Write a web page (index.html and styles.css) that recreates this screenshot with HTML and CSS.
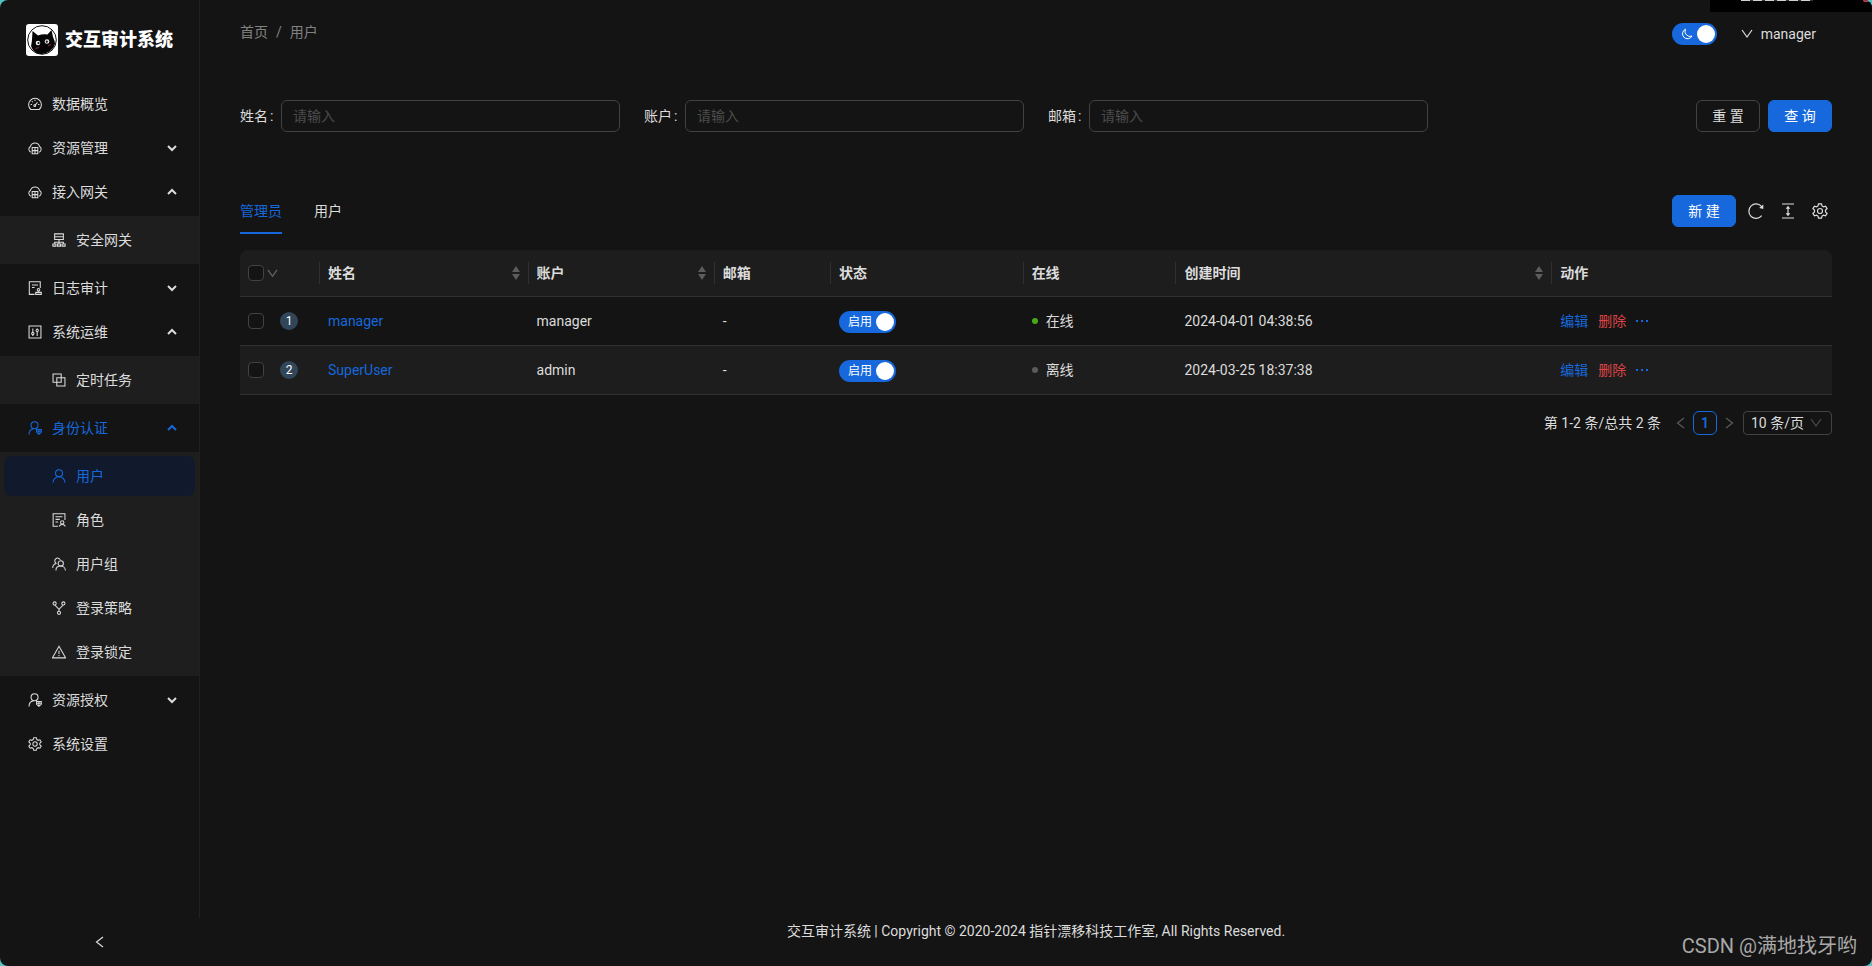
FILE: index.html
```
<!DOCTYPE html>
<html lang="zh-CN">
<head>
    <meta charset="UTF-8">
    <meta name="viewport" content="width=device-width, initial-scale=1.0">
    <title>交互审计系统 - 用户</title>
    <link rel="stylesheet" href="styles.css">
</head>
<body>

    <!-- 图标 -->
    <svg class="sprite" aria-hidden="true">
        <symbol id="i-dashboard" viewBox="0 0 16 16"><path d="M3.200 14.300A7.300 7.300 0 1 1 12.800 14.300ZM8 9.500 10.800 6.200M8 3v1.500M3 8.500h1.500M11.500 8.500h1.500M4.500 5l1 1"/><circle cx="7.700" cy="9.900" r="1"/></symbol>
        <symbol id="i-cloud" viewBox="0 0 16 16"><path d="M3.500 12.800A3.600 3.600 0 0 1 2.800 6.200 5.400 5.400 0 0 1 13.200 6.200 3.600 3.600 0 0 1 12.500 12.800M4.800 7.500h6.400v7H4.800ZM4.800 11h6.400M8 7.500V14.500"/></symbol>
        <symbol id="i-gateway" viewBox="0 0 16 16"><path d="M3 1h10v6.500H3ZM3 4.300h10M8 7.500v3M3 13v-2.500h10V13M8 10.500V13M1 12.500h3.500V15H1ZM6.300 12.500h3.500V15H6.300ZM11.500 12.500H15V15h-3.500Z"/></symbol>
        <symbol id="i-audit" viewBox="0 0 16 16"><path d="M7.500 15.300H1.500V.8H14V8M4.500 4.500h7M4.500 7.500h3M8.800 15.300v-2.300h6.400v2.300ZM12 13v-1.500"/><circle cx="12" cy="10" r="1.500"/></symbol>
        <symbol id="i-control" viewBox="0 0 16 16"><path d="M1.200 1.200h13.600v13.600H1.200ZM5.500 4v4.500M5.500 11v1.500M10.500 4v1M10.500 7.500V12.500"/><circle cx="5.500" cy="9.700" r="1.300"/><circle cx="10.500" cy="6.200" r="1.300"/></symbol>
        <symbol id="i-blocks" viewBox="0 0 16 16"><path d="M1.200 1.200h9.300v9.300H1.200ZM10.500 5.500h4.300v9.300H5.500v-4.300M5.500 10.500v-5h5"/></symbol>
        <symbol id="i-userlock" viewBox="0 0 16 16"><circle cx="7.500" cy="4.800" r="4"/><path d="M1.200 15.300C1.200 11.500 3.500 9 6.800 8.800M9.800 9.800h5.400v3.200L12.500 15.200 9.800 13ZM10 11.800h5M12.500 10v4.500"/></symbol>
        <symbol id="i-user" viewBox="0 0 16 16"><circle cx="8" cy="4.800" r="4"/><path d="M1.200 15.500C1.200 11.500 4.200 8.800 8 8.800S14.800 11.500 14.800 15.500"/></symbol>
        <symbol id="i-role" viewBox="0 0 16 16"><path d="M7 15.200H1.300V.8h13.500V8M4 4.300h8M4 7.300h5M4 10.300h3M8.500 15.500c0-3.200 6.500-3.200 6.500 0"/><circle cx="11.700" cy="10.800" r="1.900"/></symbol>
        <symbol id="i-team" viewBox="0 0 16 16"><circle cx="10" cy="7.300" r="3"/><path d="M4.500 15.500c0-3 2-5.200 5.200-5.200s5.600 2.200 5.600 5.200M9.500 3.200A3.300 3.300 0 1 0 5 7.500M.8 12.700C.8 9.800 2.500 8 5 7.500"/></symbol>
        <symbol id="i-fork" viewBox="0 0 16 16"><circle cx="3" cy="2.800" r="1.800"/><circle cx="13" cy="2.800" r="1.800"/><circle cx="8" cy="13.500" r="1.800"/><path d="M3.300 4.600 8 9.500 12.700 4.600M8 9.500v2.200"/></symbol>
        <symbol id="i-warning" viewBox="0 0 16 16"><path d="M8 1.500 15.500 14.700H.5ZM8 6.500v3.700M8 11.500v1.300"/></symbol>
        <symbol id="i-setting" viewBox="0 0 16 16"><path d="M6.500.8h3l.5 2.100 1.500.9 2.100-.6 1.500 2.500L13.500 7.100v1.800l1.600 1.400-1.500 2.500-2.100-.6-1.500.9-.5 2.100h-3L6 13.100l-1.500-.9-2.100.6L.9 10.300 2.500 8.900V7.100L.9 5.700l1.500-2.500 2.100.6L6 2.900Z"/><circle cx="8" cy="8" r="2.500"/></symbol>
        <symbol id="i-arrow" viewBox="0 0 10 10"><path d="M1 3 5 7 9 3"/></symbol>
        <symbol id="i-down" viewBox="0 0 12 12"><path d="M1 2 6 9 11 2"/></symbol>
        <symbol id="i-left" viewBox="0 0 12 12"><path d="M9 1 2.500 6l6.500 5"/></symbol>
        <symbol id="i-right" viewBox="0 0 12 12"><path d="M3 1 9.500 6 3 11"/></symbol>
        <symbol id="i-moon" viewBox="0 0 12 12"><path d="M4.500 1.200A5 5 0 1 0 11 8 5 5 0 0 1 4.500 1.200Z"/></symbol>
        <symbol id="i-reload" viewBox="0 0 16 16"><path d="M13.700 12.600A7.200 7.200 0 1 1 13.700 3.700"/><path class="solid" d="M15.300 1.500V6L11.200 5Z"/></symbol>
        <symbol id="i-height" viewBox="0 0 16 16"><path d="M2 1h12M2 15h12M8 4v8"/><path class="solid" d="M8 2.800 10.300 5.800H5.700ZM8 13.200 5.700 10.200h4.600Z"/></symbol>
        <symbol id="i-sort" viewBox="0 0 8 14"><path class="solid" d="M4 0 8 6H0ZM4 14 0 8h8Z"/></symbol>
    </svg>

    <div class="app">
        <aside class="sidebar">
            <a class="brand" href="#">
                <svg class="logo" viewBox="0 0 32 32" aria-hidden="true">
                    <rect width="32" height="32" rx="3" fill="#fff"/>
                    <circle cx="16" cy="16" r="14.300" fill="none" stroke="#111" stroke-width="1"/>
                    <path d="M6.500 7 12 11.500Q17 9.500 21.500 10.500L25.500 6 27 13Q29 17 29 20A14 14 0 0 1 10 28.700Q6 26 5 22Q6 19 6.500 7Z" fill="#050505"/>
                    <circle cx="12" cy="19" r="2.300" fill="#eee"/>
                    <circle cx="21" cy="17.500" r="2.300" fill="#eee"/>
                    <circle cx="12.500" cy="19" r="1.100" fill="#111"/>
                    <circle cx="20.800" cy="17.700" r="1.100" fill="#111"/>
                    <path d="M9.500 24.500 13 23.500M22 22 25 20.500" stroke="#8a2525" stroke-width="1"/>
                </svg>
                <span>交互审计系统</span>
            </a>

            <nav class="nav">
                <ul class="menu">
                    <li><a class="item" href="#"><svg class="icon"><use href="#i-dashboard"/></svg>数据概览</a></li>
                    <li><a class="item" href="#"><svg class="icon"><use href="#i-cloud"/></svg>资源管理<svg class="arrow"><use href="#i-arrow"/></svg></a></li>
                    <li>
                        <a class="item" href="#"><svg class="icon"><use href="#i-cloud"/></svg>接入网关<svg class="arrow open"><use href="#i-arrow"/></svg></a>
                        <ul class="submenu">
                            <li><a class="item" href="#"><svg class="icon"><use href="#i-gateway"/></svg>安全网关</a></li>
                        </ul>
                    </li>
                    <li><a class="item" href="#"><svg class="icon"><use href="#i-audit"/></svg>日志审计<svg class="arrow"><use href="#i-arrow"/></svg></a></li>
                    <li>
                        <a class="item" href="#"><svg class="icon"><use href="#i-control"/></svg>系统运维<svg class="arrow open"><use href="#i-arrow"/></svg></a>
                        <ul class="submenu">
                            <li><a class="item" href="#"><svg class="icon"><use href="#i-blocks"/></svg>定时任务</a></li>
                        </ul>
                    </li>
                    <li>
                        <a class="item active" href="#"><svg class="icon"><use href="#i-userlock"/></svg>身份认证<svg class="arrow open"><use href="#i-arrow"/></svg></a>
                        <ul class="submenu">
                            <li><a class="item active selected" href="#"><svg class="icon"><use href="#i-user"/></svg>用户</a></li>
                            <li><a class="item" href="#"><svg class="icon"><use href="#i-role"/></svg>角色</a></li>
                            <li><a class="item" href="#"><svg class="icon"><use href="#i-team"/></svg>用户组</a></li>
                            <li><a class="item" href="#"><svg class="icon"><use href="#i-fork"/></svg>登录策略</a></li>
                            <li><a class="item" href="#"><svg class="icon"><use href="#i-warning"/></svg>登录锁定</a></li>
                        </ul>
                    </li>
                    <li><a class="item" href="#"><svg class="icon"><use href="#i-userlock"/></svg>资源授权<svg class="arrow"><use href="#i-arrow"/></svg></a></li>
                    <li><a class="item" href="#"><svg class="icon"><use href="#i-setting"/></svg>系统设置</a></li>
                </ul>
            </nav>

            <button class="collapse" type="button" aria-label="收起菜单"><svg><use href="#i-left"/></svg></button>
        </aside>

        <div class="page">
            <header class="header">
                <nav class="breadcrumb"><a href="#">首页</a><span>/</span><a href="#">用户</a></nav>
                <div class="header-right">
                    <button class="switch" type="button" role="switch" aria-checked="true" aria-label="深色模式"><svg><use href="#i-moon"/></svg><i></i></button>
                    <button class="account" type="button"><svg><use href="#i-down"/></svg>manager</button>
                </div>
            </header>

            <main class="main">
                <form class="search">
                    <div class="field">
                        <label for="name">姓名<span>:</span></label>
                        <input type="text" id="name" placeholder="请输入">
                    </div>
                    <div class="field">
                        <label for="account">账户<span>:</span></label>
                        <input type="text" id="account" placeholder="请输入">
                    </div>
                    <div class="field">
                        <label for="email">邮箱<span>:</span></label>
                        <input type="text" id="email" placeholder="请输入">
                    </div>
                    <div class="search-actions">
                        <button class="btn" type="reset">重 置</button>
                        <button class="btn primary" type="button">查 询</button>
                    </div>
                </form>

                <div class="toolbar">
                    <div class="tabs" role="tablist">
                        <button class="tab current" type="button" role="tab" aria-selected="true">管理员</button>
                        <button class="tab" type="button" role="tab" aria-selected="false">用户</button>
                    </div>
                    <div class="tools">
                        <button class="btn primary" type="button">新 建</button>
                        <button class="tool" type="button" aria-label="刷新"><svg><use href="#i-reload"/></svg></button>
                        <button class="tool" type="button" aria-label="密度"><svg><use href="#i-height"/></svg></button>
                        <button class="tool" type="button" aria-label="列设置"><svg><use href="#i-setting"/></svg></button>
                    </div>
                </div>

                <table class="table">
                    <colgroup>
                        <col class="c-check"><col class="c-name"><col class="c-account"><col class="c-email">
                        <col class="c-status"><col class="c-online"><col class="c-time"><col>
                    </colgroup>
                    <thead>
                        <tr>
                            <th><div class="pick"><input type="checkbox" aria-label="全选"><svg class="pick-more"><use href="#i-down"/></svg></div></th>
                            <th><div class="th">姓名<svg class="sort"><use href="#i-sort"/></svg></div></th>
                            <th><div class="th">账户<svg class="sort"><use href="#i-sort"/></svg></div></th>
                            <th><div class="th">邮箱</div></th>
                            <th><div class="th">状态</div></th>
                            <th><div class="th">在线</div></th>
                            <th><div class="th">创建时间<svg class="sort"><use href="#i-sort"/></svg></div></th>
                            <th><div class="th">动作</div></th>
                        </tr>
                    </thead>
                    <tbody>
                        <tr>
                            <td><div class="pick row"><input type="checkbox" aria-label="选择 manager"><span class="index">1</span></div></td>
                            <td><a href="#">manager</a></td>
                            <td>manager</td>
                            <td>-</td>
                            <td><button class="switch" type="button" role="switch" aria-checked="true">启用<i></i></button></td>
                            <td><span class="state on">在线</span></td>
                            <td>2024-04-01 04:38:56</td>
                            <td><div class="actions"><a href="#">编辑</a><a class="danger" href="#">删除</a><a class="more" href="#" aria-label="更多"><i></i><i></i><i></i></a></div></td>
                        </tr>
                        <tr>
                            <td><div class="pick row"><input type="checkbox" aria-label="选择 SuperUser"><span class="index">2</span></div></td>
                            <td><a href="#">SuperUser</a></td>
                            <td>admin</td>
                            <td>-</td>
                            <td><button class="switch" type="button" role="switch" aria-checked="true">启用<i></i></button></td>
                            <td><span class="state">离线</span></td>
                            <td>2024-03-25 18:37:38</td>
                            <td><div class="actions"><a href="#">编辑</a><a class="danger" href="#">删除</a><a class="more" href="#" aria-label="更多"><i></i><i></i><i></i></a></div></td>
                        </tr>
                    </tbody>
                </table>

                <div class="pagination">
                    <span class="total">第 1-2 条/总共 2 条</span>
                    <button class="turn" type="button" aria-label="上一页"><svg><use href="#i-left"/></svg></button>
                    <button class="num" type="button">1</button>
                    <button class="turn" type="button" aria-label="下一页"><svg><use href="#i-right"/></svg></button>
                    <div class="size">
                        <select aria-label="每页条数">
                            <option>10 条/页</option>
                            <option>20 条/页</option>
                            <option>50 条/页</option>
                        </select>
                        <svg><use href="#i-down"/></svg>
                    </div>
                </div>
            </main>

            <footer class="footer">交互审计系统 | Copyright © 2020-2024 指针漂移科技工作室, All Rights Reserved.</footer>
        </div>

        <!-- 顶部露出一角的通知条 -->
        <div class="notice"><i class="notice-line"></i><i class="notice-dot"></i></div>
        <div class="watermark">CSDN @满地找牙哟</div>
    </div>

</body>
</html>
```

FILE: styles.css
```
* {
    box-sizing: border-box;
}
body {
    margin: 0;
    background-color: #52c4c4;
    color: #dcdcdc;
    font-family: Roboto, "Noto Sans CJK SC", sans-serif;
    font-size: 14px;
    line-height: 22px;
}
a {
    color: #1668dc;
    text-decoration: none;
}
ul {
    list-style: none;
    margin: 0;
    padding: 0;
}
button, input, select {
    font: inherit;
    color: inherit;
}
button {
    background: none;
    border: none;
    padding: 0;
    cursor: pointer;
}
svg {
    display: block;
    flex: none;
    fill: none;
    stroke: currentColor;
    stroke-width: 1.2;
}
.solid {
    fill: currentColor;
    stroke: none;
}
.sprite {
    position: absolute;
    width: 0;
    height: 0;
}
.app {
    position: relative;
    display: flex;
    min-height: 100vh;
    background-color: #141414;
    border-radius: 8px;
    overflow: hidden;
}

/* 侧边栏 */
.sidebar {
    display: flex;
    flex-direction: column;
    width: 200px;
    flex: none;
}
.brand {
    display: flex;
    align-items: center;
    gap: 7px;
    height: 80px;
    padding: 0 26px;
    color: #fff;
    font-size: 18px;
    font-weight: 900;
    white-space: nowrap;
    border-right: 1px solid #202020;
}
.logo {
    width: 32px;
    height: 32px;
    stroke: none;
}
.nav {
    flex: 1;
    padding-top: 4px;
    border-right: 1px solid #202020;
}
.menu, .submenu {
    display: flex;
    flex-direction: column;
    gap: 4px;
}
.item {
    display: flex;
    align-items: center;
    gap: 10px;
    height: 40px;
    margin: 0 4px;
    padding: 0 18px 0 24px;
    border-radius: 8px;
    color: #dcdcdc;
}
.submenu {
    margin-top: 4px;
    padding: 4px 0;
    background-color: #1e1e1e;
}
.submenu .item {
    padding-left: 48px;
}
.item.active {
    color: #1668dc;
}
.item.selected {
    background-color: #111a2c;
}
.icon {
    width: 14px;
    height: 14px;
}
.arrow {
    width: 10px;
    height: 10px;
    margin-left: auto;
    stroke-width: 2;
}
.arrow.open {
    transform: rotate(180deg);
}
.collapse {
    display: flex;
    align-items: center;
    justify-content: center;
    height: 48px;
}
.collapse svg {
    width: 12px;
    height: 12px;
}

/* 顶部 */
.page {
    display: flex;
    flex-direction: column;
    flex: 1;
    min-width: 0;
}
.header {
    display: flex;
    align-items: center;
    justify-content: space-between;
    height: 64px;
    padding: 0 56px 0 40px;
}
.breadcrumb {
    display: flex;
    gap: 8px;
    color: #828282;
}
.breadcrumb a {
    color: #828282;
}
.header-right {
    display: flex;
    align-items: center;
    gap: 24px;
    padding-top: 3px;
}
.account {
    display: flex;
    align-items: center;
    gap: 8px;
}
.account svg {
    width: 12px;
    height: 12px;
}
.switch {
    display: inline-flex;
    align-items: center;
    gap: 4px;
    height: 22px;
    padding: 0 2px 0 9px;
    border-radius: 11px;
    background-color: #1668dc;
    color: #fff;
    font-size: 12px;
    vertical-align: middle;
}
.switch i {
    width: 18px;
    height: 18px;
    border-radius: 9px;
    background-color: #fff;
}
.switch svg {
    width: 12px;
    height: 12px;
    stroke-width: 1;
}

/* 查询 */
.main {
    flex: 1;
    padding: 36px 40px 0;
}
.search {
    display: grid;
    grid-template-columns: repeat(4, 1fr);
    gap: 24px;
}
.field {
    display: flex;
    align-items: center;
}
.field label {
    width: 41px;
    flex: none;
}
.field label span {
    margin-left: 2px;
}
.field input {
    flex: 1;
    min-width: 0;
    height: 32px;
    padding: 0 11px;
    background-color: #141414;
    border: 1px solid #424242;
    border-radius: 6px;
}
.field input::placeholder {
    color: #4c4c4c;
}
.search-actions {
    display: flex;
    justify-content: flex-end;
    gap: 8px;
}
.btn {
    width: 64px;
    height: 32px;
    border: 1px solid #424242;
    border-radius: 6px;
}
.btn.primary {
    background-color: #1668dc;
    border-color: #1668dc;
    color: #fff;
}

/* 标签页和工具栏 */
.toolbar {
    display: flex;
    align-items: center;
    justify-content: space-between;
    margin: 56px 0 16px;
}
.tabs {
    display: flex;
    gap: 32px;
}
.tab {
    height: 46px;
    padding-top: 2px;
    border-bottom: 2px solid transparent;
}
.tab.current {
    color: #1668dc;
    border-bottom-color: #1668dc;
}
.tools {
    display: flex;
    align-items: center;
    gap: 16px;
    padding-right: 4px;
}
.tools .btn {
    margin-right: -4px;
}
.tool svg {
    width: 16px;
    height: 16px;
}

/* 表格 */
.table {
    width: 100%;
    table-layout: fixed;
    border-collapse: separate;
    border-spacing: 0;
}
.c-check { width: 80px; }
.c-name { width: 13.1%; }
.c-account { width: 11.7%; }
.c-email { width: 7.3%; }
.c-status { width: 12.1%; }
.c-online { width: 9.6%; }
.c-time { width: 23.6%; }
.table th, .table td {
    padding: 0 8px;
    text-align: left;
    border-bottom: 1px solid #303030;
}
.table th {
    height: 47px;
    background-color: #1d1d1d;
    font-weight: 600;
}
.table th:first-child {
    border-top-left-radius: 8px;
}
.table th:last-child {
    border-top-right-radius: 8px;
}
.table td {
    height: 49px;
}
.table tbody tr:nth-child(even) {
    background-color: #1d1d1d;
}
.th {
    display: flex;
    align-items: center;
    justify-content: space-between;
    margin-left: -9px;
    padding: 0 1px 0 8px;
    border-left: 1px solid #303030;
}
.sort {
    width: 8px;
    height: 14px;
    color: #5c5c5c;
}
.pick {
    display: flex;
    align-items: center;
    gap: 3px;
}
.pick.row {
    gap: 16px;
}
.pick input {
    appearance: none;
    width: 16px;
    height: 16px;
    margin: 0;
    background-color: #141414;
    border: 1px solid #424242;
    border-radius: 4px;
}
.pick-more {
    width: 11px;
    height: 11px;
    color: #6a6a6a;
}
.index {
    width: 18px;
    height: 18px;
    border-radius: 9px;
    background-color: #314659;
    color: #fff;
    font-size: 12px;
    line-height: 18px;
    text-align: center;
}
.state {
    display: flex;
    align-items: center;
    gap: 8px;
}
.state::before {
    content: "";
    width: 6px;
    height: 6px;
    border-radius: 3px;
    background-color: #5a5a5a;
}
.state.on::before {
    background-color: #49aa19;
}
.actions {
    display: flex;
    align-items: center;
    gap: 10px;
}
.actions .danger {
    color: #dc4446;
}
.more {
    display: flex;
    gap: 3px;
}
.more i {
    width: 2px;
    height: 2px;
    background-color: #1668dc;
}

/* 分页 */
.pagination {
    display: flex;
    align-items: center;
    justify-content: flex-end;
    margin-top: 16px;
}
.total {
    margin-right: 8px;
}
.turn {
    display: flex;
    align-items: center;
    justify-content: center;
    width: 24px;
    height: 24px;
    color: #5c5c5c;
}
.turn svg {
    width: 12px;
    height: 12px;
}
.num {
    width: 24px;
    height: 24px;
    border: 1px solid #1668dc;
    border-radius: 6px;
    color: #1668dc;
    font-weight: 600;
}
.size {
    position: relative;
    margin-left: 2px;
}
.size select {
    appearance: none;
    display: block;
    width: 89px;
    height: 24px;
    padding: 0 7px;
    background-color: #141414;
    border: 1px solid #424242;
    border-radius: 4px;
}
.size svg {
    position: absolute;
    top: 6px;
    right: 10px;
    width: 12px;
    height: 12px;
    color: #4c4c4c;
}

/* 页脚 */
.footer {
    padding: 24px 0;
    text-align: center;
}
.notice {
    position: absolute;
    top: 0;
    right: 0;
    display: flex;
    justify-content: space-between;
    width: 162px;
    height: 12px;
    padding-left: 31px;
    background-color: #000;
}
.notice-line {
    width: 72px;
    height: 1px;
    background: repeating-linear-gradient(90deg, #d0d0d0 0 9px, #333 9px 12px);
}
.notice-dot {
    width: 9px;
    height: 2px;
    border-radius: 0 0 4px 4px;
    background-color: #c8384e;
}
.watermark {
    position: absolute;
    right: 15px;
    bottom: 6px;
    color: #a8a8a8;
    font-size: 20px;
    line-height: 28px;
}
```
